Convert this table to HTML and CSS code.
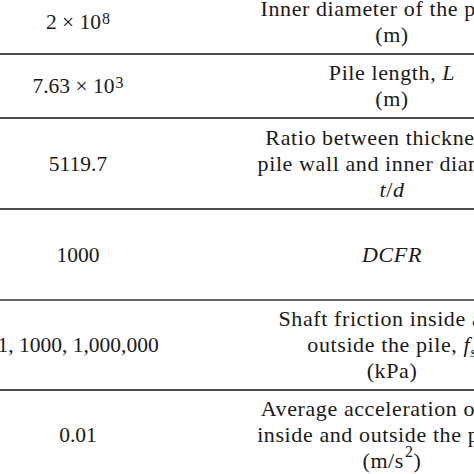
FILE: index.html
```html
<!DOCTYPE html>
<html>
<head>
<meta charset="utf-8">
<link rel="stylesheet" href="styles.css">
</head>
<body>
<div class="table">
  <div class="row r1">
    <div class="val">2 × 10<sup>8</sup></div>
    <div class="desc"><span>Inner diameter of the pile, <i>d</i></span><span>(m)</span></div>
  </div>
  <div class="row r2">
    <div class="val">7.63 × 10<sup>3</sup></div>
    <div class="desc"><span>Pile length, <i>L</i></span><span>(m)</span></div>
  </div>
  <div class="row r3">
    <div class="val">5119.7</div>
    <div class="desc"><span>Ratio between thickness of</span><span>pile wall and inner diameter,</span><span><i>t</i>/<i>d</i></span></div>
  </div>
  <div class="row r4">
    <div class="val">1000</div>
    <div class="desc"><span><i>DCFR</i></span></div>
  </div>
  <div class="row r5">
    <div class="val">1, 1000, 1,000,000</div>
    <div class="desc"><span>Shaft friction inside and</span><span>outside the pile, <i>f<sub>s</sub></i></span><span>(kPa)</span></div>
  </div>
  <div class="row r6">
    <div class="val">0.01</div>
    <div class="desc"><span>Average acceleration of soil</span><span>inside and outside the pile, <i>a</i></span><span>(m/s<sup>2</sup>)</span></div>
  </div>
</div>
</body>
</html>
```
FILE: styles.css
```css
html, body {
  margin: 0;
  padding: 0;
  overflow: hidden;
  background: #ffffff;
}
body {
  width: 474px;
  height: 474px;
  font-family: "Liberation Serif", "Times New Roman", serif;
  font-size: 22px;
  line-height: 26px;
  color: #1a1a1a;
}
.table {
  margin-top: -9px;
  width: 628px;
}
.row {
  display: grid;
  grid-template-columns: 156px 472px;
  border-bottom: 2px solid #4c4c4c;
}
.r1, .r2 { height: 62px; }
.r3, .r4 { height: 89px; }
.r5 { height: 88px; }
.r6 { height: 88px; border-bottom: none; }
.r4 { border-bottom-color: #666; }
.val {
  display: flex;
  align-items: center;
  justify-content: center;
  white-space: nowrap;
  font-size: 21.5px;
}
.desc {
  display: flex;
  flex-direction: column;
  align-items: center;
  justify-content: center;
  text-align: center;
  white-space: nowrap;
  letter-spacing: 0.6px;
}
.desc span {
  display: block;
  height: 26px;
}
sup {
  font-size: 16px;
  line-height: 0;
  position: relative;
  top: -3px;
  margin-left: 1px;
}
sub {
  font-size: 15px;
  line-height: 0;
}
```
